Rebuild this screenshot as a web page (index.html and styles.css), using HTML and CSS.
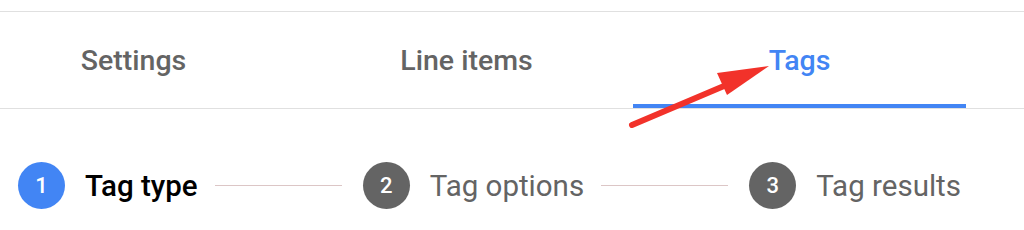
FILE: index.html
```html
<!DOCTYPE html>
<html lang="en">
<head>
    <meta charset="UTF-8">
    <meta name="viewport" content="width=device-width, initial-scale=1.0">
    <title>Tags</title>
    <link rel="stylesheet" href="styles.css">
</head>
<body>
    <div class="page">
        <div class="tabs">
            <div class="tab">Settings</div>
            <div class="tab">Line items</div>
            <div class="tab active">Tags</div>
        </div>
        <div class="stepper">
            <div class="step current">
                <span class="num">1</span>
                <span class="label">Tag type</span>
            </div>
            <div class="connector"></div>
            <div class="step">
                <span class="num">2</span>
                <span class="label">Tag options</span>
            </div>
            <div class="connector"></div>
            <div class="step">
                <span class="num">3</span>
                <span class="label">Tag results</span>
            </div>
        </div>
        <svg class="arrow" viewBox="0 0 1024 230" width="1024" height="230">
            <line x1="632" y1="125" x2="724" y2="86" stroke="#f2322a" stroke-width="6" stroke-linecap="round"/>
            <polygon points="769,66 717,73 727,95" fill="#f2322a"/>
        </svg>
    </div>
</body>
</html>
```

FILE: styles.css
```css
body {
    margin: 0;
    font-family: Roboto, "Liberation Sans", sans-serif;
    background: #fff;
}
.page {
    position: relative;
    width: 1024px;
    height: 230px;
    overflow: hidden;
    padding-top: 11px;
    box-sizing: border-box;
}
.tabs {
    display: flex;
    height: 96px;
    border-top: 1px solid #e0e0e0;
    border-bottom: 1px solid #e0e0e0;
    margin-left: -33px;
}
.tab {
    position: relative;
    width: 333px;
    display: flex;
    align-items: center;
    justify-content: center;
    font-size: 28.5px;
    font-weight: 500;
    color: #646464;
}
.tab.active {
    color: #4285f4;
}
.tab.active::after {
    content: "";
    position: absolute;
    left: 0;
    right: 0;
    bottom: 0;
    height: 4px;
    background: #4285f4;
}
.stepper {
    display: flex;
    align-items: center;
    margin-top: 53px;
    padding-left: 18px;
}
.step {
    display: flex;
    align-items: center;
    gap: 20px;
}
.num {
    width: 47px;
    height: 47px;
    border-radius: 50%;
    background: #646464;
    color: #fff;
    font-size: 22px;
    font-weight: 500;
    display: flex;
    align-items: center;
    justify-content: center;
}
.label {
    font-size: 29.5px;
    color: #646464;
}
.current .num {
    background: #4285f4;
}
.current .label {
    color: #000;
    font-weight: 500;
}
.connector {
    width: 127px;
    height: 1px;
    background: #dcc6c6;
    margin: 0 21px 0 17px;
}
.arrow {
    position: absolute;
    left: 0;
    top: 0;
    pointer-events: none;
}
```
